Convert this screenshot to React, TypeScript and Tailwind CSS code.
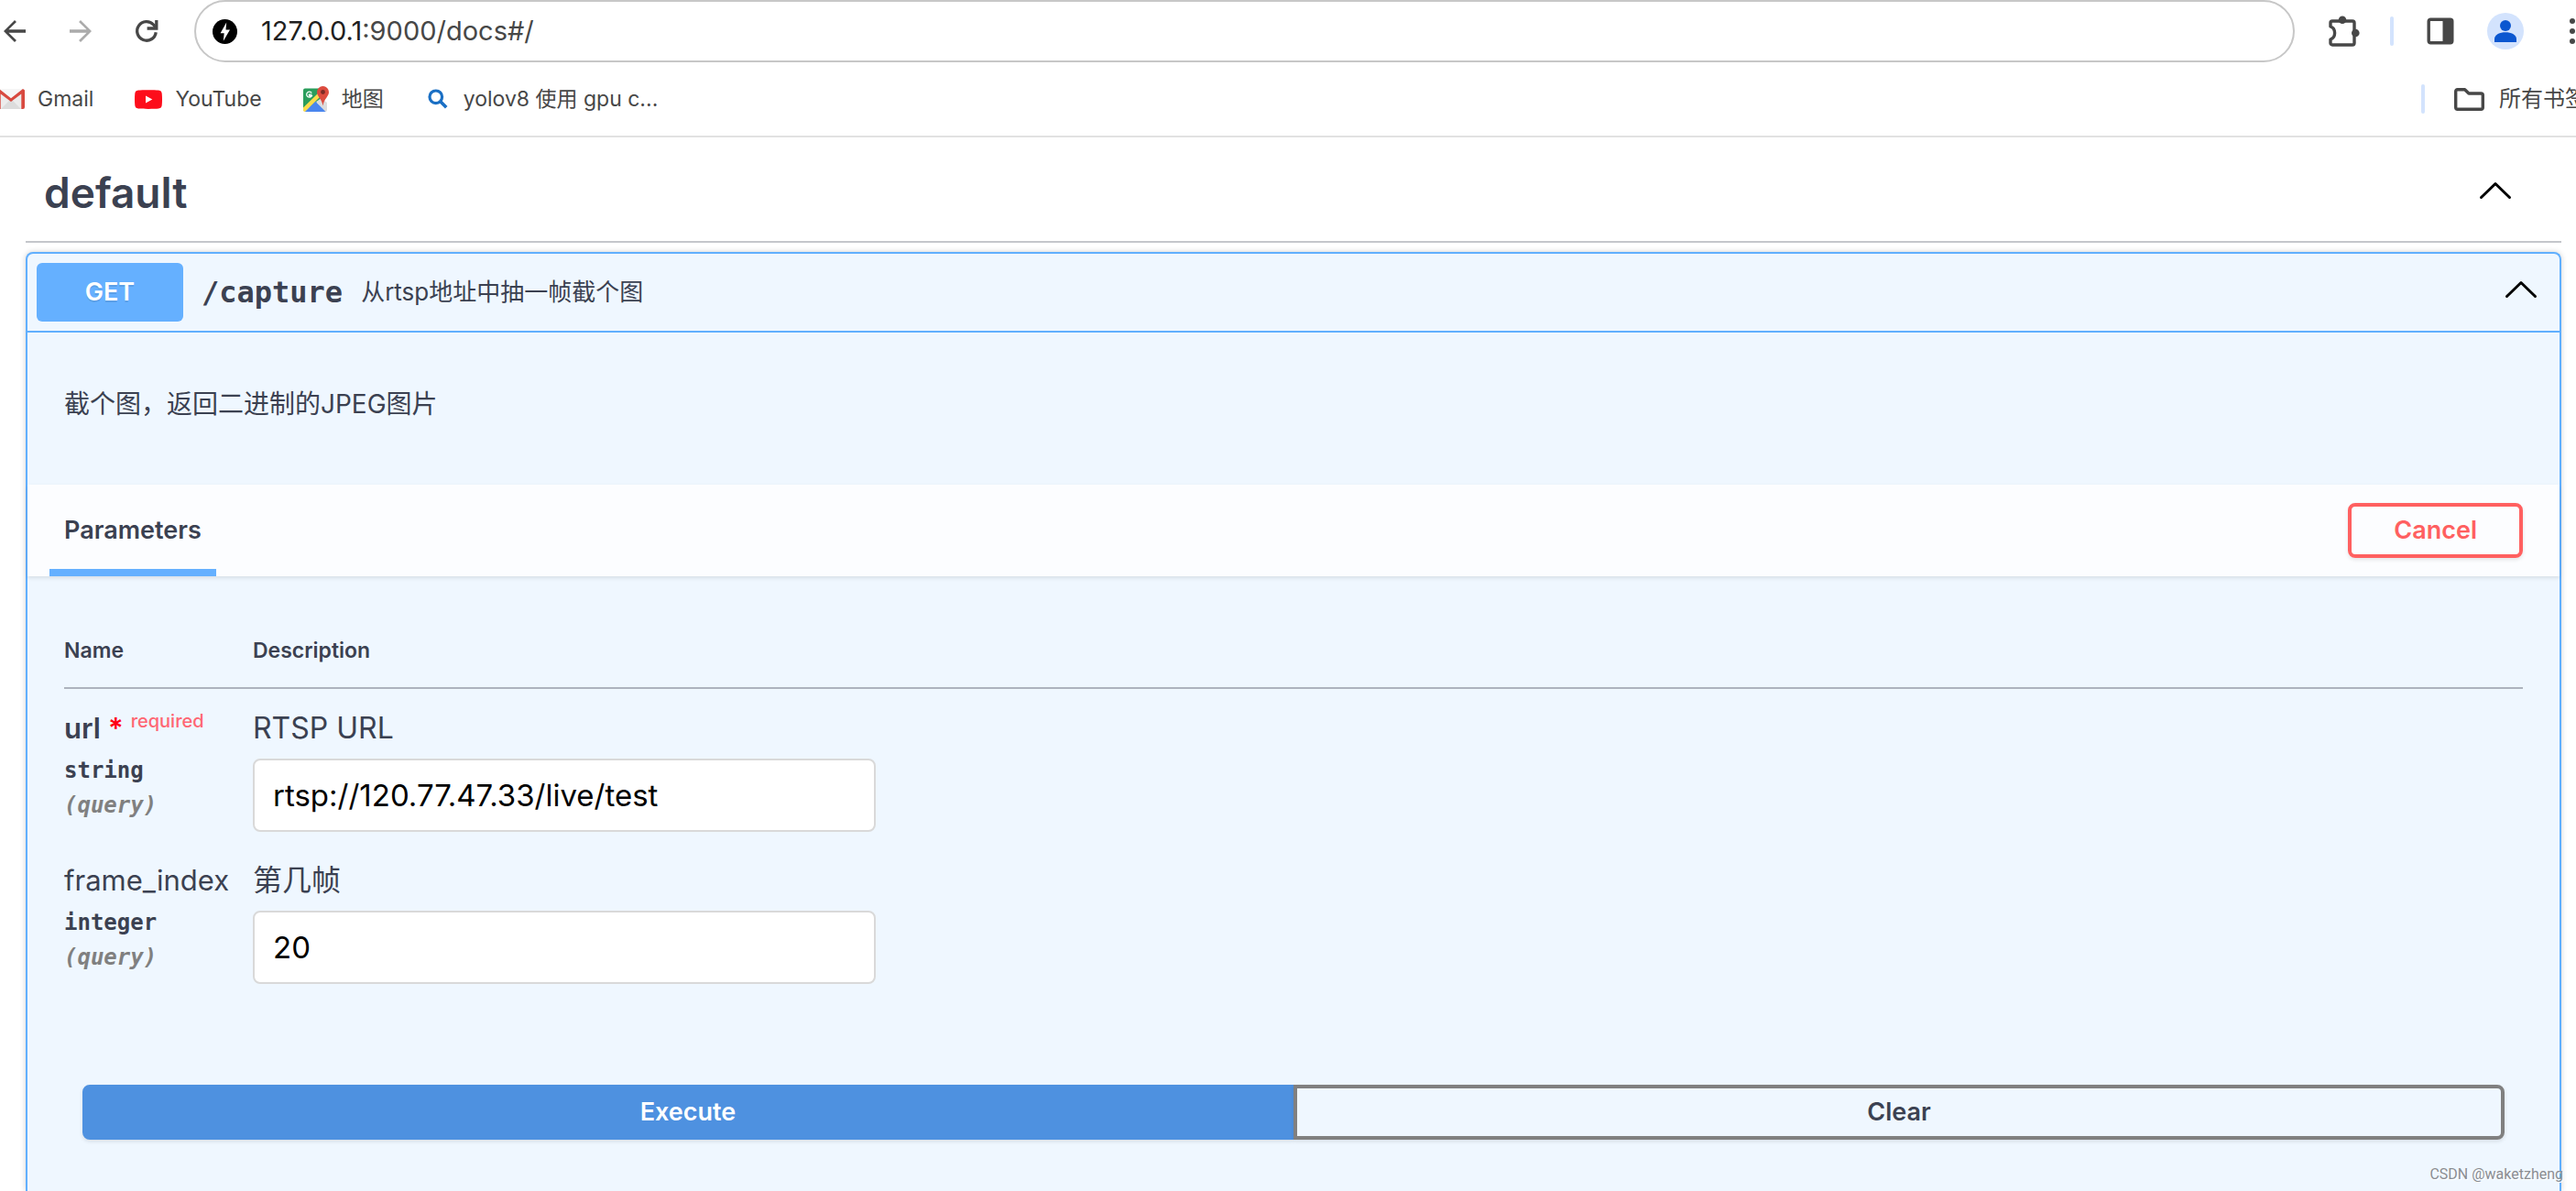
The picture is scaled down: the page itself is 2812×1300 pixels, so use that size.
import React, { useState } from "react";

const sans = "font-['Inter','Noto_Sans_CJK_SC',sans-serif]";
const mono = "font-['DejaVu_Sans_Mono',monospace]";

function BackIcon() {
  return (
    <svg className="size-6" viewBox="4 4 16 16" fill="currentColor" aria-hidden="true">
      <path d="M20 10.9H7.6l5.7-5.6L12 4l-8 8 8 8 1.3-1.3-5.7-5.6H20z" />
    </svg>
  );
}

function ForwardIcon() {
  return (
    <svg className="size-6" viewBox="4 4 16 16" fill="currentColor" aria-hidden="true">
      <path d="M4 10.9h12.4l-5.7-5.6L12 4l8 8-8 8-1.3-1.3 5.7-5.6H4z" />
    </svg>
  );
}

function ReloadIcon() {
  return (
    <svg className="size-6 overflow-visible" viewBox="1 1 24 24" fill="none" stroke="currentColor" strokeWidth="3.3" aria-hidden="true">
      <path d="M23.2 14.2A10.3 10.3 0 1 1 20.6 6l2.6 3.2" />
      <path d="M23.8 1v9H13.6" />
    </svg>
  );
}

function BoltBadge() {
  return (
    <svg className="size-[27px] shrink-0" viewBox="0 0 27 27" aria-hidden="true">
      <circle cx="13.5" cy="13.5" r="13.5" fill="#000" />
      <path d="M15.2 3.6 8.6 15.2h4.1l-.9 8.6 7.2-12.2h-4.5z" fill="#fff" />
    </svg>
  );
}

function PuzzleIcon() {
  return (
    <svg className="size-9" viewBox="0 0 36 36" aria-hidden="true">
      <path
        d="M3 13V9a2 2 0 0 1 2-2H27a2 2 0 0 1 2 2V31a2 2 0 0 1-2 2H5a2 2 0 0 1-2-2V27c3-1 4.600-3.600 4.600-7S6 14 3 13z"
        fill="none"
        stroke="#474747"
        strokeWidth="3.4"
        strokeLinejoin="round"
      />
      <circle cx="16" cy="5.8" r="4.3" fill="#474747" />
      <circle cx="30.3" cy="20" r="4.3" fill="#474747" />
    </svg>
  );
}

function SidePanelIcon() {
  return (
    <svg className="size-[30px]" viewBox="0 0 30 30" aria-hidden="true">
      <rect x="2.2" y="2.2" width="25.6" height="25.6" rx="2" fill="none" stroke="#474747" strokeWidth="3.4" />
      <path d="M17.5 2H28v26H17.5z" fill="#474747" />
    </svg>
  );
}

function AvatarIcon() {
  return (
    <svg className="size-10" viewBox="0 0 40 40" aria-hidden="true">
      <circle cx="20" cy="20" r="20" fill="#d3e3fd" />
      <circle cx="20" cy="14" r="6" fill="#0b57d0" />
      <path d="M8 32v-3.6c0-4.6 6-7.2 12-7.2s12 2.600 12 7.200V32z" fill="#0b57d0" />
    </svg>
  );
}

function DotsIcon() {
  return (
    <svg className="h-7 w-1.5" viewBox="0 0 6 28" fill="#474747" aria-hidden="true">
      <circle cx="3" cy="3" r="3" />
      <circle cx="3" cy="14" r="3" />
      <circle cx="3" cy="25" r="3" />
    </svg>
  );
}

function FolderIcon() {
  return (
    <svg className="h-[25px] w-[33px]" viewBox="0 0 33 25" fill="none" stroke="#474747" strokeWidth="3.4" strokeLinejoin="round" aria-hidden="true">
      <path d="M3.700 1.700H11.600L16 6H29.300a2 2 0 0 1 2 2V21.300a2 2 0 0 1-2 2H3.700a2 2 0 0 1-2-2V3.700a2 2 0 0 1 2-2z" />
    </svg>
  );
}

function GmailIcon() {
  return (
    <svg className="h-[22px] w-[27px]" viewBox="3 0 27 22" aria-hidden="true">
      <path d="M2 0H28a2 2 0 0 1 2 2V20a2 2 0 0 1-2 2H2z" fill="#ececec" />
      <path d="M4 22 15 11l11 11z" fill="#dcdcdc" />
      <path d="M2 0h26L15 11z" fill="#f6f6f6" />
      <path d="M0 1.500 2 0 15 10.200 28 0l2 1.500V20a2 2 0 0 1-2 2h-1.700V5.600L15 14 3.700 5.600V22H2a2 2 0 0 1-2-2z" fill="#d8493f" />
    </svg>
  );
}

function YouTubeIcon() {
  return (
    <svg className="h-[21px] w-[30px]" viewBox="0 0 30 21" aria-hidden="true">
      <path d="M4 .5C8 0 22 0 26 .5 28.500.8 29.500 2 29.700 4c.4 4 .4 9 0 13-.2 2-1.200 3.200-3.700 3.500-4 .5-18 .5-22 0C1.500 20.200.5 19 .3 17c-.4-4-.4-9 0-13C.5 2 1.500.8 4 .5z" fill="#fd0d1b" />
      <path d="M12 6.500v8l7.300-4z" fill="#fff" />
    </svg>
  );
}

function MapsIcon() {
  return (
    <svg className="size-7" viewBox="0 0 28 28" aria-hidden="true">
      <path d="M2 2.500H17l2 12L1.500 27A1.500 1.500 0 0 1 0 25.500V4.500a2 2 0 0 1 2-2z" fill="#2a9d5c" />
      <path d="M20 13 26 18V26a2 2 0 0 1-2 2L14 17z" fill="#dcdcdc" />
      <path d="M1.500 28 13.200 16.500 24.500 28z" fill="#4a86ee" />
      <path d="M0 23.500 16.500 7.500l1.800 4.300L1.800 28A2 2 0 0 1 0 26z" fill="#fbdc4b" />
      <path d="M9.200 7.400A3 3 0 1 0 9.300 10.600H6.500V9.100H9.500" fill="none" stroke="#fff" strokeWidth="1.300" />
      <path d="M21.500 0A6.500 6.500 0 0 1 28 6.500c0 5-5.300 7-6.500 15-1.200-8-6.500-10-6.500-15A6.500 6.500 0 0 1 21.500 0z" fill="#dc4b3e" />
      <circle cx="21.500" cy="6.500" r="2.400" fill="#7d2b25" />
    </svg>
  );
}

function SearchIcon() {
  return (
    <svg className="size-7" viewBox="0 0 28 28" fill="none" stroke="#1a6fc4" strokeWidth="3.200" aria-hidden="true">
      <circle cx="11.800" cy="11.800" r="6.800" />
      <path d="M16.200 16.200 23.200 23.200" strokeWidth="3.600" />
    </svg>
  );
}

function ChevronUp() {
  return (
    <svg className="size-10" viewBox="0 0 40 40" fill="none" stroke="#000" strokeWidth="3" strokeLinecap="round" strokeLinejoin="round" aria-hidden="true">
      <path d="M4.500 27.500 20 12.500 35.500 27.500" />
    </svg>
  );
}

const bookmarks = [
  { label: "Gmail", icon: <GmailIcon /> },
  { label: "YouTube", icon: <YouTubeIcon /> },
  { label: "地图", icon: <MapsIcon /> },
  { label: "yolov8 使用 gpu c...", icon: <SearchIcon /> },
];

function BrowserChrome() {
  return (
    <header className="border-b-2 border-[#e1e1e1] text-[#474747]">
      <div className="flex h-[68px] items-center pl-1 pr-px">
        <nav className="flex shrink-0 items-center gap-12" aria-label="History">
          <button type="button" aria-label="Back"><BackIcon /></button>
          <button type="button" aria-label="Forward" disabled className="text-[#ababab]"><ForwardIcon /></button>
          <button type="button" aria-label="Reload"><ReloadIcon /></button>
        </nav>
        <div className="ml-10 flex h-full min-w-0 flex-1 items-center gap-[26px] rounded-full border-2 border-[#c7c7c7] px-[18px] text-[29px] leading-9">
          <BoltBadge />
          <a href="#/" className="truncate">
            <span className="text-[#1f1f1f]">127.0.0.1</span>:9000/docs#/
          </a>
        </div>
        <button type="button" aria-label="Extensions" className="ml-9"><PuzzleIcon /></button>
        <span className="ml-8 h-8 w-1 rounded-full bg-[#d3e3fd]" />
        <button type="button" aria-label="Side panel" className="ml-9"><SidePanelIcon /></button>
        <button type="button" aria-label="Profile" className="ml-9"><AvatarIcon /></button>
        <button type="button" aria-label="Menu" className="ml-[50px]"><DotsIcon /></button>
      </div>
      <div className="flex h-20 items-center justify-between whitespace-nowrap text-[23px] leading-8">
        <nav className="flex items-center gap-[45px]" aria-label="Bookmarks">
          {bookmarks.map((b) => (
            <a key={b.label} href="#/" className="flex items-center gap-3.5">
              {b.icon}
              {b.label}
            </a>
          ))}
        </nav>
        <div className="-mr-3 flex items-center">
          <span className="h-8 w-1 rounded-full bg-[#d3e3fd]" />
          <button type="button" className="ml-8 flex items-center gap-4 text-2xl leading-8">
            <FolderIcon />
            所有书签
          </button>
        </div>
      </div>
    </header>
  );
}

type Param = { id: string; required: boolean; type: string; description: string; initial: string };

const params: Param[] = [
  { id: "url", required: true, type: "string", description: "RTSP URL", initial: "rtsp://120.77.47.33/live/test" },
  { id: "frame_index", required: false, type: "integer", description: "第几帧", initial: "20" },
];

function ParamRow({ param }: { param: Param }) {
  const [value, setValue] = useState(param.initial);
  return (
    <tr className="align-top">
      <td className="w-[206px] pt-5">
        <div className="flex text-[31px] leading-[46px]">
          <span className={param.required ? "font-semibold" : ""}>{param.id}</span>
          {param.required && (
            <>
              <span className="ml-2 font-semibold text-[#ff0015]">*</span>
              <span className="ml-2 text-xl leading-[30px] font-medium text-[#ff6673]">required</span>
            </>
          )}
        </div>
        <div className={`${mono} mt-1 text-2xl leading-[38px] font-bold`}>
          <div>{param.type}</div>
          <div className="text-[#808080] italic">({"query"})</div>
        </div>
      </td>
      <td className="pt-5 pb-2.5">
        <label htmlFor={param.id} className="block text-[32px] leading-[46px]">{param.description}</label>
        <input
          id={param.id}
          value={value}
          onChange={(e) => setValue(e.target.value)}
          className="mt-2.5 block h-20 w-[680px] rounded-lg border-2 border-[#d9d9d9] bg-white px-5 text-[33px] text-black"
        />
      </td>
    </tr>
  );
}

export default function App() {
  return (
    <div className={`${sans} relative flex min-h-screen flex-col overflow-hidden bg-white text-[#3b4151]`}>
      <BrowserChrome />
      <main className="flex flex-1 flex-col pr-4 pl-7">
        <div className="flex items-center justify-between border-b-2 border-[#c4c6cb] pt-6 pr-[52px] pb-[17px] pl-5">
          <h3 className="text-[46px] leading-[72px] font-semibold">default</h3>
          <button type="button" aria-label="Collapse section" className="mb-1"><ChevronUp /></button>
        </div>

        <section className="mt-2.5 flex-1 rounded-t-lg border-2 border-b-0 border-[#61affe] bg-[#eff7ff] pb-14 shadow-[0_0_6px_rgba(0,0,0,0.19)]">
          <div className="flex items-center border-b-2 border-[#61affe] py-2.5 pr-[22px] pl-2.5">
            <span className="flex h-16 w-40 items-center justify-center rounded-md bg-[#65b0ff] text-[27px] font-semibold text-white [text-shadow:0_2px_0_rgba(0,0,0,0.1)]">GET</span>
            <span className={`${mono} ml-5 text-[32px] leading-[44px] font-bold`}>/capture</span>
            <span className="ml-5 text-[26px] leading-[44px]">从rtsp地址中抽一帧截个图</span>
            <button type="button" aria-label="Collapse operation" className="mb-1.5 ml-auto"><ChevronUp /></button>
          </div>

          <p className="px-10 pt-14 pb-[66px] text-[28px] leading-[44px]">截个图，返回二进制的JPEG图片</p>

          <div className="flex h-[100px] items-center justify-between bg-[#fcfdff] pr-10 pl-6 shadow-[0_2px_4px_rgba(0,0,0,0.1)]">
            <h4 className="flex h-full items-center border-b-8 border-[#65b0ff] px-4 pt-2 text-[27px] font-semibold">Parameters</h4>
            <button type="button" className="h-15 rounded-lg border-4 border-[#ff6060] px-[46px] text-[27px] font-semibold text-[#ff6060] shadow-[0_2px_4px_rgba(0,0,0,0.1)]">Cancel</button>
          </div>

          <div className="px-10 pt-[63px]">
            <table className="w-full border-collapse text-left">
              <thead>
                <tr className="text-[23px] leading-9">
                  <th scope="col" className="border-b-2 border-[#adb3be] pb-[22px] font-semibold">Name</th>
                  <th scope="col" className="border-b-2 border-[#adb3be] pb-[22px] font-semibold">Description</th>
                </tr>
              </thead>
              <tbody>
                {params.map((p) => <ParamRow key={p.id} param={p} />)}
              </tbody>
            </table>
          </div>

          <div className="mt-[100px] flex px-[60px] text-[27px] font-semibold">
            <button type="button" className="h-15 flex-1 rounded-l-lg border-4 border-[#4e91e0] bg-[#4e91e0] text-white shadow-[0_2px_4px_rgba(0,0,0,0.1)]">Execute</button>
            <button type="button" className="h-15 flex-1 rounded-r-lg border-4 border-[#808080] shadow-[0_2px_4px_rgba(0,0,0,0.1)]">Clear</button>
          </div>
        </section>
      </main>
      <div className="absolute right-[14px] bottom-1.5 font-['Roboto',sans-serif] text-base leading-6 text-[#8a8d92] [text-shadow:1px_1px_0_#fff]">CSDN @waketzheng</div>
    </div>
  );
}
